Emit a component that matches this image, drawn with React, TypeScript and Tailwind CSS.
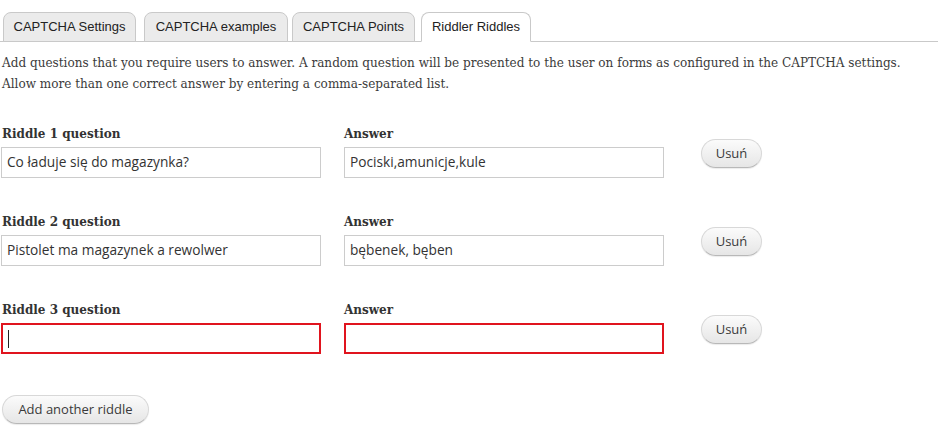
const tabs = [
  { label: "CAPTCHA Settings", w: "w-[133px]", active: false },
  { label: "CAPTCHA examples", w: "w-[144px]", active: false },
  { label: "CAPTCHA Points", w: "w-[123px]", active: false },
  { label: "Riddler Riddles", w: "w-[110px]", active: true },
];

const riddles = [
  { n: 1, q: "Co ładuje się do magazynka?", a: "Pociski,amunicje,kule", error: false },
  { n: 2, q: "Pistolet ma magazynek a rewolwer", a: "bębenek, bęben", error: false },
  { n: 3, q: "", a: "", error: true },
];

function Btn({ children, className = "" }: { children: React.ReactNode; className?: string }) {
  return (
    <button
      className={
        "h-[29px] rounded-[15px] border border-[#d8d8d8] border-b-[#b8b8b8] bg-gradient-to-b from-[#fbfbfb] to-[#e6e6e6] px-[13px] text-[13px] text-[#3a3a3a] shadow-[0_1px_1px_rgba(0,0,0,0.08)] " +
        className
      }
      style={{ fontFamily: '"Open Sans", "DejaVu Sans", sans-serif' }}
    >
      {children}
    </button>
  );
}

export default function App() {
  const serif = { fontFamily: '"DejaVu Serif", Georgia, serif' };
  const sans = { fontFamily: '"Open Sans", "DejaVu Sans", sans-serif' };
  return (
    <div className="w-[941px] h-[441px] bg-white overflow-hidden">
      <div className="pt-[12px] mr-[3px] flex border-b border-[#c9c9c9] pl-[3px]">
        {tabs.map((t, i) => (
          <div
            key={t.label}
            className={
              "h-[30px] -mb-px flex items-center justify-center rounded-t-[8px] border border-[#c9c9c9] text-[13px] text-[#222] " +
              t.w +
              (t.active ? " bg-white border-b-white" : " bg-[#ebebeb]") +
              (i === 0 ? " mr-[8px]" : i === 1 ? " mr-[4px]" : " mr-[6px]")
            }
            style={{ fontFamily: '"Liberation Sans", Arial, sans-serif' }}
          >
            {t.label}
          </div>
        ))}
      </div>

      <p className="pl-[2px] pt-[11px] text-[12.05px] leading-[21px] text-[#3b3b3b]" style={serif}>
        Add questions that you require users to answer. A random question will be presented to the user on forms as configured in the CAPTCHA settings.
        <br />
        Allow more than one correct answer by entering a comma-separated list.
      </p>

      <div className="mt-[30px] flex flex-col gap-[35px]">
        {riddles.map((r) => (
          <div key={r.n} className="flex items-start pl-[1px]">
            <div className="w-[320px]">
              <div className="pl-[1px] text-[12px] font-bold leading-[18px] text-[#333]" style={serif}>
                Riddle {r.n} question
              </div>
              <div
                className={
                  "mt-[4px] flex h-[31px] items-center px-[5px] text-[13.7px] text-[#333] " +
                  (r.error ? "border-2 border-[#e0141e]" : "border border-[#ccc]")
                }
                style={sans}
              >
                {r.error ? <span className="h-[18px] w-px bg-[#222]" /> : r.q}
              </div>
            </div>
            <div className="ml-[23px] w-[320px]">
              <div className="text-[12px] font-bold leading-[18px] text-[#333]" style={serif}>
                Answer
              </div>
              <div
                className={
                  "mt-[4px] flex h-[31px] items-center px-[5px] text-[13.7px] text-[#333] " +
                  (r.error ? "border-2 border-[#e0141e]" : "border border-[#ccc]")
                }
                style={sans}
              >
                {r.a}
              </div>
            </div>
            <Btn className="ml-[37px] mt-[14px] w-[61px] px-0">Usuń</Btn>
          </div>
        ))}
      </div>

      <div className="mt-[41px] pl-[2px]">
        <Btn className="w-[147px] px-0">Add another riddle</Btn>
      </div>
    </div>
  );
}
